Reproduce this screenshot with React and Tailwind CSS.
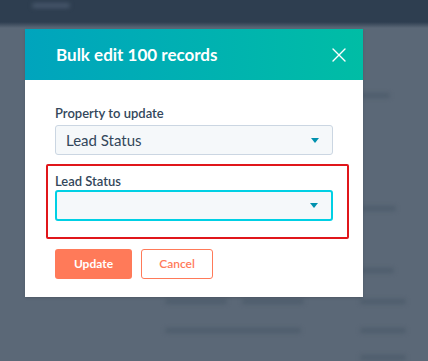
import { X } from 'lucide-react'

const font = { fontFamily: 'Lato, "Open Sans", sans-serif' }

function Caret() {
  return (
    <svg width="8" height="5" viewBox="0 0 8 5" className="shrink-0">
      <path d="M0 0 L8 0 L4 5 Z" fill="#0091ae" />
    </svg>
  )
}

function Select({ value, focused }) {
  return (
    <div
      className={`flex items-center justify-between bg-[#f5f8fa] rounded-[3px] pl-[10px] pr-[13px] ${
        focused ? 'h-[31px] border-2 border-[#00d0e4]' : 'h-[30px] border border-[#cbd6e2]'
      }`}
    >
      <span className="text-[15px] text-[#33475b]">{value}</span>
      <Caret />
    </div>
  )
}

// blurred rows of the page behind the dialog
const rows = [
  { h: 'h-[113px]', left: [], right: 'w-[30px]' },
  { h: 'h-[62px]', left: [], right: 'w-[36px]' },
  { h: 'h-[31px]', left: [], right: 'w-[34px]' },
  { h: 'h-[29px]', left: ['w-[62px]', 'w-[62px]'], right: 'w-[46px]' },
  { h: 'h-[27px]', left: ['w-[136px]'], right: 'w-[46px]' },
  { h: 'h-[27px]', left: [], right: 'w-[46px]' },
]

function Bar({ w }) {
  return <div className={`h-[5px] rounded bg-[#4e5d6c] blur-[2px] ${w}`} />
}

export default function App() {
  return (
    <div className="relative w-[428px] h-[361px] overflow-hidden bg-[#5b6877]" style={font}>
      <div className="h-[22px] bg-[#2e3e50] pl-[32px] pt-[3px]">
        <div className="w-[38px] h-[5px] rounded bg-[#46566a] blur-[2px]" />
      </div>
      <div className="h-[6px] bg-gradient-to-b from-[#2e3e50] to-[#5b6877]" />

      <div className="flex flex-col pt-[65px]">
        {rows.map((r, i) => (
          <div key={i} className={`flex ${r.h}`}>
            <div className="flex gap-[15px] pl-[165px] w-[360px]">
              {r.left.map((w, j) => <Bar key={j} w={w} />)}
            </div>
            <Bar w={r.right} />
          </div>
        ))}
      </div>

      {/* dialog over the page */}
      <div className="absolute left-[25px] top-[29px] w-[338px] bg-white shadow-sm">
        <div className="h-[51px] flex items-center justify-between pl-[31px] pr-[12px] bg-gradient-to-r from-[#00a4bd] to-[#00bda5]">
          <h1 className="text-[17px] font-bold text-white">Bulk edit 100 records</h1>
          <X size={24} strokeWidth={1.4} color="#ffffff" />
        </div>

        <div className="px-[30px] pt-[24px] pb-[18px]">
          <div className="text-[13px] leading-[18px] font-semibold text-[#33475b] mb-[3px]">Property to update</div>
          <Select value="Lead Status" />

          <div className="mt-[9px] -ml-[9px] -mr-[16px] pl-[7px] pr-[14px] pt-[6px] pb-[16px] border-[2px] border-[#e0161b] rounded-[2px]">
            <div className="text-[13px] leading-[18px] font-semibold text-[#33475b]">Lead Status</div>
            <Select value="" focused />
          </div>

          <div className="flex gap-[9px] mt-[10px]">
            <button className="w-[77px] h-[30px] rounded-[3px] bg-[#ff7a59] text-white text-[12px] font-bold">Update</button>
            <button className="w-[72px] h-[30px] rounded-[3px] border border-[#ff7a59] text-[#ff7a59] text-[12px] font-semibold">Cancel</button>
          </div>
        </div>
      </div>
    </div>
  )
}
